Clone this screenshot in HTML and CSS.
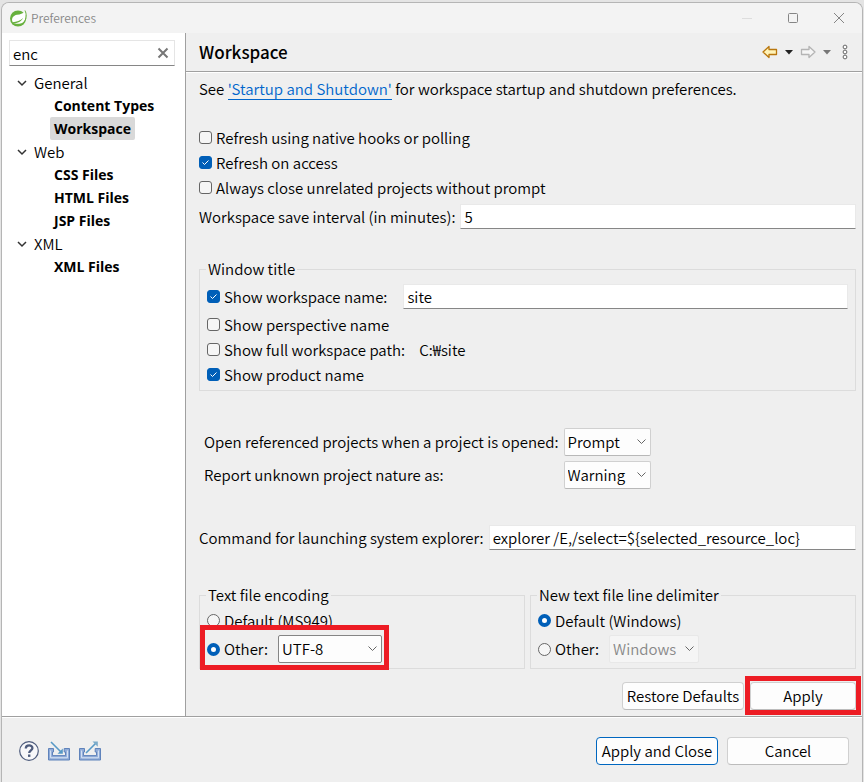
FILE: index.html
```
<!DOCTYPE html>
<html lang="en">
    <head>
        <meta charset="utf-8">
        <title>Preferences</title>
        <link rel="stylesheet" href="styles.css">
    </head>
    <body>
        <div class="window">
            <header class="titlebar">
                <svg class="logo" width="17" height="17" viewBox="0 0 17 17">
                    <circle cx="8" cy="8.500" r="8" fill="#68b13e"/>
                    <path d="M14.500 1.500c1.600 4.500 1.500 9-2 11.300-3 1.800-6.500.6-9.300 1 4.500-.8 8.300-2.300 9.800-5.800-2.500 3-6.500 3.800-10.300 4.300C.8 8.500 3.300 5.500 7 4.800c3.500-.6 5.800-.8 7.500-3.300z" fill="#fff"/>
                    <path d="M15 .500c1.700 3.500 1.700 8-.5 11" fill="none" stroke="#68b13e"/>
                </svg>
                <span class="titlebar-text">Preferences</span>
                <button class="win-button" aria-label="Minimize">
                    <svg width="12" height="12" viewBox="0 0 12 12"><path d="M1 6.500h10" stroke="#ddd"/></svg>
                </button>
                <button class="win-button" aria-label="Maximize">
                    <svg width="12" height="12" viewBox="0 0 12 12"><rect x="1.500" y="1.500" width="9" height="9" rx="1" fill="none" stroke="#858585"/></svg>
                </button>
                <button class="win-button" aria-label="Close">
                    <svg width="12" height="12" viewBox="0 0 12 12"><path d="M1 1l10 10M11 1L1 11" stroke="#858585"/></svg>
                </button>
            </header>

            <div class="columns">
                <nav class="sidebar">
                    <div class="search">
                        <input type="text" value="enc" aria-label="Filter">
                        <button aria-label="Clear">
                            <svg width="12" height="12" viewBox="0 0 12 12"><path d="M1.500 1.500l9 9M10.500 1.500l-9 9" stroke="#777" stroke-width="2"/></svg>
                        </button>
                    </div>
                    <ul class="tree">
                        <li>
                            <span class="group"><svg width="10" height="8" viewBox="0 0 10 8"><path d="M1 2l4 4 4-4" fill="none" stroke="#333" stroke-width="1.500"/></svg>General</span>
                            <ul>
                                <li><a href="#">Content Types</a></li>
                                <li><a href="#" class="selected">Workspace</a></li>
                            </ul>
                        </li>
                        <li>
                            <span class="group"><svg width="10" height="8" viewBox="0 0 10 8"><path d="M1 2l4 4 4-4" fill="none" stroke="#333" stroke-width="1.500"/></svg>Web</span>
                            <ul>
                                <li><a href="#">CSS Files</a></li>
                                <li><a href="#">HTML Files</a></li>
                                <li><a href="#">JSP Files</a></li>
                            </ul>
                        </li>
                        <li>
                            <span class="group"><svg width="10" height="8" viewBox="0 0 10 8"><path d="M1 2l4 4 4-4" fill="none" stroke="#333" stroke-width="1.500"/></svg>XML</span>
                            <ul>
                                <li><a href="#">XML Files</a></li>
                            </ul>
                        </li>
                    </ul>
                </nav>

                <main class="page">
                    <div class="page-header">
                        <h1>Workspace</h1>
                        <div class="history">
                            <button aria-label="Back">
                                <svg width="16" height="14" viewBox="0 0 16 14"><path d="M1 7l6-5.500v3h7.500v5H7v3z" fill="#fff3b8" stroke="#b9770e" stroke-width="1.300" stroke-linejoin="round"/></svg>
                            </button>
                            <button aria-label="Back menu">
                                <svg width="8" height="5" viewBox="0 0 8 5"><path d="M0 0h8L4 4.500z" fill="#222"/></svg>
                            </button>
                            <button aria-label="Forward">
                                <svg width="16" height="14" viewBox="0 0 16 14"><path d="M15 7L9 1.500v3H1.500v5H9v3z" fill="#f5f5f5" stroke="#b4b4b4" stroke-width="1.300" stroke-linejoin="round"/></svg>
                            </button>
                            <button aria-label="Forward menu">
                                <svg width="8" height="5" viewBox="0 0 8 5"><path d="M0 0h8L4 4.500z" fill="#777"/></svg>
                            </button>
                            <button aria-label="View menu">
                                <svg width="6" height="16" viewBox="0 0 6 16"><g fill="#fff" stroke="#666"><circle cx="3" cy="3" r="1.900"/><circle cx="3" cy="8" r="1.900"/><circle cx="3" cy="13" r="1.900"/></g></svg>
                            </button>
                        </div>
                    </div>

                    <form class="settings" id="settings">
                        <p>See <a href="#">'Startup and Shutdown'</a> for workspace startup and shutdown preferences.</p>

                        <div class="section">
                            <div class="row"><input type="checkbox" id="hooks"><label for="hooks">Refresh using native hooks or polling</label></div>
                            <div class="row"><input type="checkbox" id="access" checked><label for="access">Refresh on access</label></div>
                            <div class="row"><input type="checkbox" id="unrelated"><label for="unrelated">Always close unrelated projects without prompt</label></div>
                            <div class="row field">
                                <label for="interval">Workspace save interval (in minutes):</label>
                                <input type="text" id="interval" value="5">
                            </div>
                        </div>

                        <fieldset class="window-title">
                            <legend>Window title</legend>
                            <div class="row name-row">
                                <input type="checkbox" id="show-name" checked><label for="show-name">Show workspace name:</label>
                                <input type="text" value="site" aria-label="Workspace name">
                            </div>
                            <div class="row"><input type="checkbox" id="perspective"><label for="perspective">Show perspective name</label></div>
                            <div class="row"><input type="checkbox" id="path"><label for="path">Show full workspace path:</label><span class="path">C:₩site</span></div>
                            <div class="row"><input type="checkbox" id="product" checked><label for="product">Show product name</label></div>
                        </fieldset>

                        <div class="choices">
                            <label for="referenced">Open referenced projects when a project is opened:</label>
                            <select id="referenced"><option>Prompt</option></select>
                            <label for="nature">Report unknown project nature as:</label>
                            <select id="nature"><option>Warning</option></select>
                        </div>

                        <div class="row field">
                            <label for="command">Command for launching system explorer:</label>
                            <input type="text" id="command" value="explorer /E,/select=${selected_resource_loc}">
                        </div>

                        <div class="groups">
                            <fieldset>
                                <legend>Text file encoding</legend>
                                <div class="row"><input type="radio" name="encoding" id="enc-default"><label for="enc-default">Default (MS949)</label></div>
                                <div class="row other marked mark-encoding">
                                    <input type="radio" name="encoding" id="enc-other" checked><label for="enc-other">Other:</label>
                                    <select class="editable" aria-label="Encoding"><option>UTF-8</option></select>
                                </div>
                            </fieldset>
                            <fieldset>
                                <legend>New text file line delimiter</legend>
                                <div class="row"><input type="radio" name="delimiter" id="del-default" checked><label for="del-default">Default (Windows)</label></div>
                                <div class="row other">
                                    <input type="radio" name="delimiter" id="del-other"><label for="del-other">Other:</label>
                                    <select disabled aria-label="Line delimiter"><option>Windows</option></select>
                                </div>
                            </fieldset>
                        </div>

                        <div class="page-buttons">
                            <button type="reset" class="button">Restore Defaults</button>
                            <div class="marked"><button type="button" class="button apply">Apply</button></div>
                        </div>
                    </form>
                </main>
            </div>

            <footer class="footer">
                <button aria-label="Help">
                    <svg width="20" height="20" viewBox="0 0 20 20">
                        <circle cx="10" cy="10" r="9.300" fill="#f7f7f9" stroke="#4d5b7c" stroke-width="1.200"/>
                        <path d="M6.800 7.500c0-4.300 6.800-4 6.600-.3-.1 2-3.200 2.300-3.200 4.900" fill="none" stroke="#4d5b7c" stroke-width="2.300"/>
                        <rect x="9" y="13.500" width="2.400" height="2.400" fill="#4d5b7c"/>
                    </svg>
                </button>
                <button aria-label="Import">
                    <svg width="22" height="20" viewBox="0 0 22 20">
                        <path d="M.5 7.500h5v3.500H4.500v3.600h13V11h-1.300V7.500h5.300v11.500H.5z" fill="#8fabd8" stroke="#5f83bb"/>
                        <path d="M2.600 9.500v7.300h16.800V9.500" fill="none" stroke="#dce7f6"/>
                        <path d="M3 1l10 10" stroke="#5799c6" stroke-width="1.600"/>
                        <path d="M14.800 7.500v5.300H9.500z" fill="#5799c6"/>
                    </svg>
                </button>
                <button aria-label="Export">
                    <svg width="22" height="20" viewBox="0 0 22 20">
                        <path d="M.5 7.500h5v3.500H4.500v3.600h13V11h-1.300V7.500h5.300v11.500H.5z" fill="#8fabd8" stroke="#5f83bb"/>
                        <path d="M2.600 9.500v7.300h16.800V9.500" fill="none" stroke="#dce7f6"/>
                        <path d="M7 12l10-10" stroke="#5799c6" stroke-width="1.600"/>
                        <path d="M13.500.500h5.300v5.300z" fill="#7cabc9"/>
                    </svg>
                </button>
                <div class="footer-buttons">
                    <button class="button primary">Apply and Close</button>
                    <button class="button">Cancel</button>
                </div>
            </footer>
        </div>
    </body>
</html>
```
FILE: styles.css
```
* {
    box-sizing: border-box;
}

body {
    margin: 0;
    padding: 2px 1px 0 1px;
    background-color: #e4e4e4;
    color: #000;
    font: 350 15px/20px "Noto Sans CJK KR", "Open Sans", sans-serif;
}

input, button, select {
    font: inherit;
    color: inherit;
    margin: 0;
}

button {
    padding: 0;
    border: none;
    background: none;
}

svg {
    display: block;
}

.window {
    display: flex;
    flex-direction: column;
    min-height: calc(100vh - 2px);
    border: 1px solid #b5b5b5;
    border-bottom: none;
    border-radius: 8px 8px 0 0;
    background-color: #efefef;
    overflow: hidden;
}

.titlebar {
    display: flex;
    align-items: center;
    height: 30px;
    padding: 0 0 0 8px;
    background-color: #f3f3f3;
    color: #888;
    font-size: 12px;
}

.titlebar-text {
    flex: 1;
    margin-left: 4px;
}

.win-button {
    display: flex;
    justify-content: center;
    width: 46px;
}

.columns {
    display: flex;
    flex: 1;
    border-bottom: 1px solid #a0a0a0;
}

/* tree */

.sidebar {
    width: 184px;
    padding: 7px;
    border-right: 1px solid #a0a0a0;
    background-color: #fff;
}

.search {
    display: flex;
    align-items: center;
    height: 26px;
    margin-right: 3px;
    border: 1px solid #e5e5e5;
    border-bottom-color: #868686;
}

.search button {
    margin-right: 5px;
}

.tree, .tree ul {
    margin: 0;
    padding: 0;
    list-style: none;
    line-height: 23px;
}

.tree {
    padding: 5px 0 0 8px;
}

.tree ul {
    padding-left: 33px;
}

.group {
    display: flex;
    align-items: center;
    column-gap: 7px;
}

.tree a {
    display: inline-block;
    padding: 0 4px;
    border-radius: 2px;
    color: #000;
    font-family: "Open Sans", sans-serif;
    font-size: 14px;
    font-weight: bold;
    text-decoration: none;
    vertical-align: top;
}

.tree .selected {
    background-color: #d9d9d9;
}

/* page */

.page {
    flex: 1;
    min-width: 0;
}

.page-header {
    display: flex;
    align-items: center;
    justify-content: space-between;
    height: 39px;
    padding: 0 14px 0 13px;
    border-bottom: 1px solid #a0a0a0;
}

h1 {
    margin: 0;
    font-size: 17px;
    font-weight: 500;
}

.history {
    display: flex;
    align-items: center;
    column-gap: 7px;
}

.history button:last-child {
    margin-left: 4px;
}

.settings {
    padding: 6px 6px 5px 13px;
    border-top: 1px solid #fff;
}

p {
    margin: 0;
}

p a {
    color: #0066cc;
    text-decoration: none;
    border-bottom: 1px solid #0066cc;
}

.section {
    margin: 26px 0 30px;
}

.row {
    display: flex;
    align-items: center;
    min-height: 25px;
}

input[type=checkbox], input[type=radio] {
    appearance: none;
    flex: none;
    width: 13px;
    height: 13px;
    margin-right: 4px;
    border: 1px solid #666;
    border-radius: 3px;
    background-color: #f6f6f6;
}

input[type=radio] {
    border-radius: 50%;
}

input[type=checkbox]:checked {
    border-color: #005fb8;
    background: #005fb8 url("data:image/svg+xml,%3Csvg xmlns='http://www.w3.org/2000/svg' viewBox='0 0 11 11'%3E%3Cpath d='M2.500 5.500l2 2 4-4' fill='none' stroke='white'/%3E%3C/svg%3E");
}

input[type=radio]:checked {
    border: 4px solid #005fb8;
    background-color: #fff;
}

input[type=text] {
    flex: 1;
    min-width: 0;
    height: 25px;
    padding: 0 3px;
    border: 1px solid #e9e9e9;
    border-bottom-color: #868686;
    background-color: #fff;
}

.search input[type=text] {
    height: 24px;
    border: none;
    outline: none;
}

.field {
    column-gap: 5px;
}

.section .field {
    margin-top: 4px;
}

fieldset {
    min-width: 0;
    margin: 0;
    padding: 3px 7px 5px;
    border: 1px solid #dcdcdc;
}

legend {
    padding: 0 2px;
    margin-left: -1px;
}

.window-title {
    padding-bottom: 3px;
}

.name-row {
    margin: 2px 0 3px;
}

.name-row label {
    margin-right: 16px;
}

.path {
    margin-left: 14px;
}

.choices {
    display: grid;
    grid-template-columns: max-content 87px;
    align-items: center;
    gap: 5px;
    margin: 37px 5px 36px;
}

select {
    appearance: none;
    height: 28px;
    padding: 0 3px;
    border: 1px solid #d0d0d0;
    border-bottom-color: #b8b8b8;
    border-radius: 2px;
    background: #fdfdfd url("data:image/svg+xml,%3Csvg xmlns='http://www.w3.org/2000/svg' width='9' height='6' viewBox='0 0 9 6'%3E%3Cpath d='M.5.500l4 4 4-4' fill='none' stroke='%23666'/%3E%3C/svg%3E") no-repeat right 4px center;
}

select:disabled {
    border-color: #e8e8e8;
    background-color: #f5f5f5;
    color: #888;
    opacity: 1;
}

.groups {
    display: flex;
    column-gap: 5px;
    margin: 35px 0 13px;
}

.groups fieldset {
    flex: 1;
}

.other {
    margin-top: 2px;
}

.other select {
    width: 90px;
    margin-left: 10px;
}

.other .editable {
    width: 104px;
    border-color: #858585;
}

.button {
    min-width: 122px;
    height: 28px;
    border: 1px solid #d0d0d0;
    border-bottom-color: #bcbcbc;
    border-radius: 4px;
    background-color: #fdfdfd;
}

.page-buttons {
    display: flex;
    justify-content: flex-end;
    column-gap: 6px;
}

.apply {
    min-width: 106px;
}

/* red highlight frames lying over the controls */

.marked {
    position: relative;
}

.marked::after {
    content: "";
    position: absolute;
    inset: -6px -5px -5px;
    border: 5px solid #ed1c24;
    pointer-events: none;
}

.mark-encoding {
    width: max-content;
}

.mark-encoding::after {
    inset: -10px -7px -7px;
}

/* footer */

.footer {
    display: flex;
    align-items: center;
    column-gap: 9px;
    padding: 19px 13px 17px 17px;
    border-top: 1px solid #fff;
}

.footer-buttons {
    display: flex;
    column-gap: 9px;
    margin-left: auto;
}

.primary {
    border-color: #0067c0;
}
```
